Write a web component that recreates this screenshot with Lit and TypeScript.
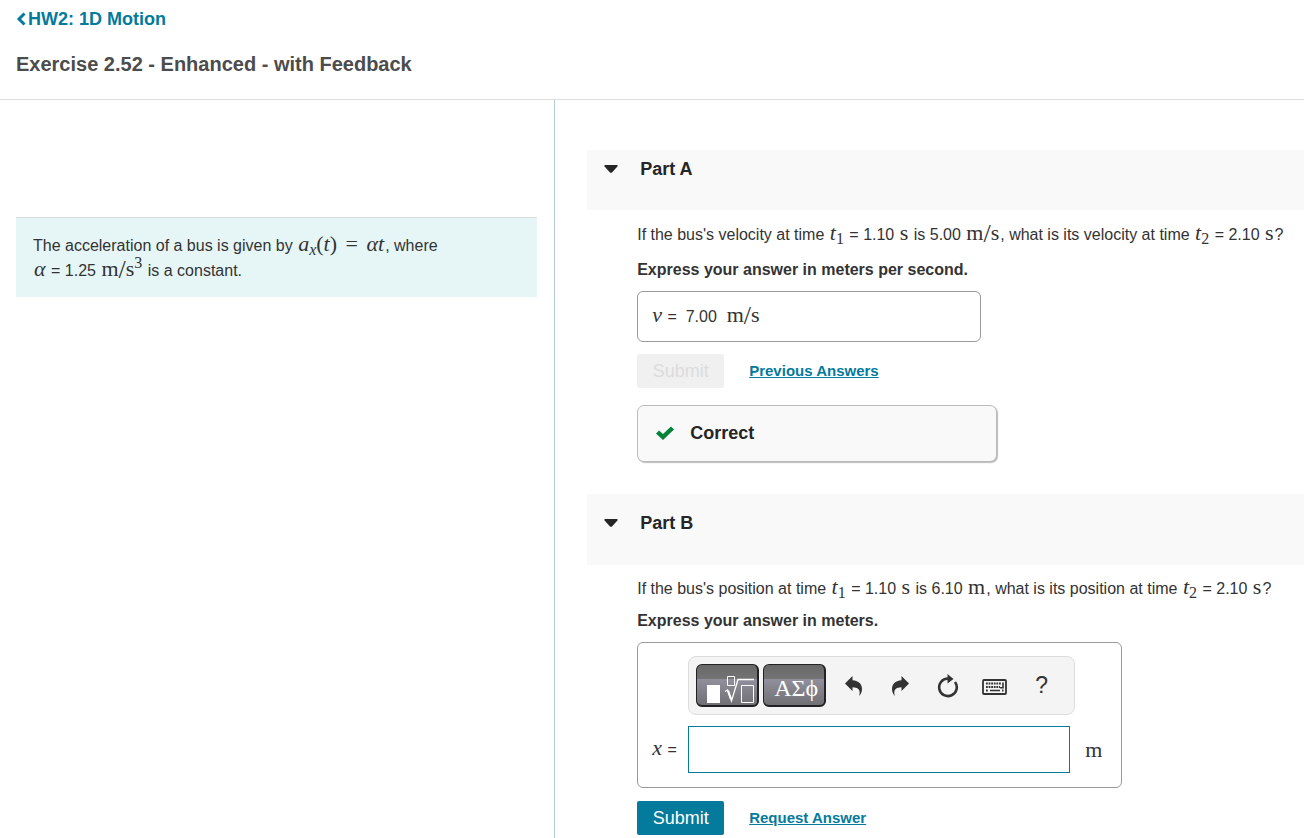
import { LitElement, html, css, svg } from "lit";
import { customElement, property } from "lit/decorators.js";

const shared = css`
  * { box-sizing: border-box; }
  p, h1, h2 { margin: 0; }
  a { color: #047a9c; font-weight: 700; }
  button { font-family: inherit; cursor: pointer; }
  .math { font-family: "Liberation Serif", serif; font-size: 22px; line-height: 1; margin: 0 1px; }
  .math sub, .math sup { font-size: 16px; line-height: 0; }
  .math sub { vertical-align: -4px; }
  .math sup { vertical-align: 8px; }
  .rel { margin: 0 3px; }
  .slash { font-size: 26px; line-height: 0; vertical-align: -2px; }
`;

const perSecond = html`m<span class="slash">/</span>s`;

@customElement("part-header")
class PartHeader extends LitElement {
  @property() label = "";
  static styles = [shared, css`
    :host { display: block; background: #f9f9f9; }
    .toggle {
      display: flex; align-items: center; gap: 22px; width: 100%;
      border: 0; background: none; padding: 0 17px; color: #252525;
    }
    .title { font-size: 18px; line-height: 24px; font-weight: 700; }
    .caret { width: 14px; height: 8px; display: block; }
  `];
  render() {
    return html`<button class="toggle" aria-expanded="true">
      <svg class="caret" viewBox="0 0 14 8" aria-hidden="true"><path d="M1 0h12q1 .4.4 1.4L8 7.4q-1 .9-2 0L.6 1.4Q0 .4 1 0z" fill="#252525"/></svg>
      <h2 class="title">${this.label}</h2>
    </button>`;
  }
}

const undoPath = svg`<path d="M0 7.500 7.500 0v4.200c6.500.4 9.500 4.400 9.500 8.500 0 3-1 5.300-2.800 7.300 1.800-6.500-1.500-8.600-6.700-8.700V15z" fill="#333"/>`;

@customElement("math-toolbar")
class MathToolbar extends LitElement {
  static styles = [shared, css`
    :host {
      display: flex; align-items: center; height: 59px; padding: 0 7px;
      border: 1px solid #ddd; border-radius: 8px; background: #f4f4f4;
    }
    .key {
      width: 63px; height: 43px; padding: 0; border: 1px solid #222; border-bottom-width: 2px; border-right-width: 2px;
      border-radius: 6px; color: #fff; display: flex; align-items: center; justify-content: center;
      background: linear-gradient(#686868 0, #747474 35%, #918f9c 36%, #707074 100%);
    }
    .key + .key { margin-left: 4px; }
    .greek { font-family: "Liberation Serif", serif; font-size: 24px; line-height: 24px; padding: 6px 0 0 4px; }
    .tool {
      width: 47px; height: 43px; padding: 0; border: 0; background: none; color: #333;
      display: flex; align-items: center; justify-content: center; font-size: 23px;
    }
    .key + .tool { margin-left: 4px; }
    svg { display: block; }
  `];
  render() {
    return html`
      <button class="key" aria-label="Templates">
        <svg width="60" height="40" viewBox="0 0 60 40" fill="none" stroke="#fff">
          <path d="M10 20h13v18H10z" fill="#fff" stroke="none"/>
          <path d="M30.500 11.500h7v9h-7zM44.500 20.500h12v17h-12z"/>
          <path d="M28 26.500l2.500-1.500 4 11L41 14.500h16" stroke-width="1.300"/>
          <path d="M31 25.500l3 8.500" stroke-width="2.200"/>
        </svg>
      </button>
      <button class="key" aria-label="Symbols"><span class="greek">ΑΣϕ</span></button>
      <button class="tool" aria-label="Undo"><svg width="17" height="20" viewBox="0 0 17 20">${undoPath}</svg></button>
      <button class="tool" aria-label="Redo"><svg width="17" height="20" viewBox="0 0 17 20"><g transform="matrix(-1 0 0 1 17 0)">${undoPath}</g></svg></button>
      <button class="tool" aria-label="Reset"><svg width="22" height="24" viewBox="0 0 22 24">
        <path d="M11 4.500a8.800 8.800 0 1 0 7 3.500" fill="none" stroke="#333" stroke-width="2.600"/>
        <path d="M10.500 0 16.500 5l-6 4.500z" fill="#333"/></svg></button>
      <button class="tool" aria-label="Keyboard shortcuts"><svg width="25" height="20" viewBox="0 0 25 20">
        <rect x="1" y="4" width="23" height="14" rx="1" fill="none" stroke="#333" stroke-width="1.800"/>
        <path d="M4 7.500h15M4 11h14M4 14.500h2M20 14.500h1.500" fill="none" stroke="#333" stroke-width="1.800" stroke-dasharray="1.800 .8"/>
        <path d="M8 14.500h10M21 6.500v5.200h-3" fill="none" stroke="#333" stroke-width="1.600"/></svg></button>
      <button class="tool" aria-label="Help">?</button>`;
  }
}

@customElement("app-root")
class AppRoot extends LitElement {
  static styles = [shared, css`
    :host {
      display: flex; flex-direction: column; min-height: 100vh; background: #fff; color: #333;
      font-family: "Liberation Sans", Arial, sans-serif; font-size: 16px; line-height: 24px;
    }
    .top { padding: 7px 16px 22px; border-bottom: 1px solid #ddd; }
    .back { display: flex; width: fit-content; align-items: center; gap: 2px; font-size: 18px; line-height: 24px; text-decoration: none; }
    .heading { margin-top: 20px; font-size: 20px; line-height: 26px; font-weight: 700; color: #4c4c4c; }
    .columns { flex: 1; display: flex; }
    .intro { flex: 0 0 42.5%; padding: 117px 17px 0 16px; }
    .given { padding: 15px 17px 14px; border-top: 1px solid #d9dddd; background: #e6f6f6; }
    .work { flex: 1; min-width: 0; border-left: 1px solid #b5c8d8; padding: 50px 0 3px 32px; }
    .header-a { padding: 7px 0 29px; }
    .header-b { margin-top: 32px; padding: 17px 0 30px; }
    .body { padding: 12px 0 0 50px; }
    .part-b .body { padding-top: 11px; }
    .bold { font-weight: 700; }
    .part-a .bold { margin-top: 11px; }
    .part-b .bold { margin-top: 8px; }
    .answer {
      display: flex; align-items: center; width: 344px; max-width: 100%; height: 51px; margin-top: 9px; padding: 0 13px;
      border: 1px solid #999; border-radius: 6px; white-space: pre;
    }
    .actions { display: flex; align-items: center; gap: 25px; margin-top: 12px; }
    .part-b .actions { margin-top: 13px; }
    .submit {
      width: 87px; height: 34px; padding: 0; border: 0; border-radius: 2px;
      background: #047a9c; color: #fff; font-size: 18px;
    }
    .submit:disabled { background: #f0f0f0; color: #dcdcdc; cursor: default; }
    .link { font-size: 15px; line-height: 20px; }
    .feedback {
      display: flex; align-items: center; gap: 15px; width: 360px; max-width: 100%; height: 57px;
      margin-top: 17px; padding: 0 17px 2px; border: 1px solid #bbb; border-radius: 7px;
      background: #f9f9f9; box-shadow: 1px 1px 1px #bbb; color: #252525; font-size: 18px; font-weight: 700;
    }
    .editor {
      display: grid; grid-template-columns: 37px 1fr 37px; row-gap: 11px; align-items: center;
      width: 485px; max-width: 100%; margin-top: 9px; padding: 13px 14px 14px 13px;
      border: 1px solid #999; border-radius: 6px;
    }
    .tools { grid-column: 2 / 4; margin-right: 32px; }
    .entry {
      width: 100%; height: 47px; padding: 0 12px; border: 1px solid #047a9c; border-radius: 0;
      background: #fff; color: #333; font: inherit; outline: none;
    }
    .unit { padding-left: 14px; }
  `];
  render() {
    return html`
      <header class="top">
        <a class="back" href="#"><svg width="10" height="14" viewBox="0 0 10 14" aria-hidden="true"><path d="M8.500 1.500 3 7l5.500 5.500" fill="none" stroke="#047a9c" stroke-width="3"/></svg>HW2: 1D Motion</a>
        <h1 class="heading">Exercise 2.52 - Enhanced - with Feedback</h1>
      </header>
      <div class="columns">
        <aside class="intro">
          <p class="given">The acceleration of a bus is given by <span class="math"><i>a<sub>x</sub></i>(<i>t</i>) <span class="rel">=</span> <i>αt</i></span>, where<br>
            <span class="math"><i>α</i></span> = 1.25 <span class="math">${perSecond}<sup>3</sup></span> is a constant.</p>
        </aside>
        <main class="work">
          <section class="part-a">
            <part-header class="header-a" label="Part A"></part-header>
            <div class="body">
              <p>If the bus's velocity at time <span class="math"><i>t</i><sub>1</sub></span> = 1.10 <span class="math">s</span> is 5.00 <span class="math">${perSecond}</span>, what is its velocity at time <span class="math"><i>t</i><sub>2</sub></span> = 2.10 <span class="math">s</span>?</p>
              <p class="bold">Express your answer in meters per second.</p>
              <div class="answer"><span><i class="math">v</i> =  7.00  <span class="math">${perSecond}</span></span></div>
              <div class="actions"><button class="submit" disabled>Submit</button><a class="link" href="#">Previous Answers</a></div>
              <div class="feedback" role="status"><svg width="20" height="16" viewBox="0 0 20 16" aria-hidden="true"><path d="M1 8.500 4 5.500 8 9 16 1.500 19 4.500 8 15z" fill="#038238"/></svg>Correct</div>
            </div>
          </section>
          <section class="part-b">
            <part-header class="header-b" label="Part B"></part-header>
            <div class="body">
              <p>If the bus's position at time <span class="math"><i>t</i><sub>1</sub></span> = 1.10 <span class="math">s</span> is 6.10 <span class="math">m</span>, what is its position at time <span class="math"><i>t</i><sub>2</sub></span> = 2.10 <span class="math">s</span>?</p>
              <p class="bold">Express your answer in meters.</p>
              <div class="editor">
                <math-toolbar class="tools" role="toolbar"></math-toolbar>
                <label for="position"><i class="math">x</i> =</label>
                <input class="entry" id="position" type="text" autocomplete="off">
                <span class="unit math">m</span>
              </div>
              <div class="actions"><button class="submit">Submit</button><a class="link" href="#">Request Answer</a></div>
            </div>
          </section>
        </main>
      </div>`;
  }
}
